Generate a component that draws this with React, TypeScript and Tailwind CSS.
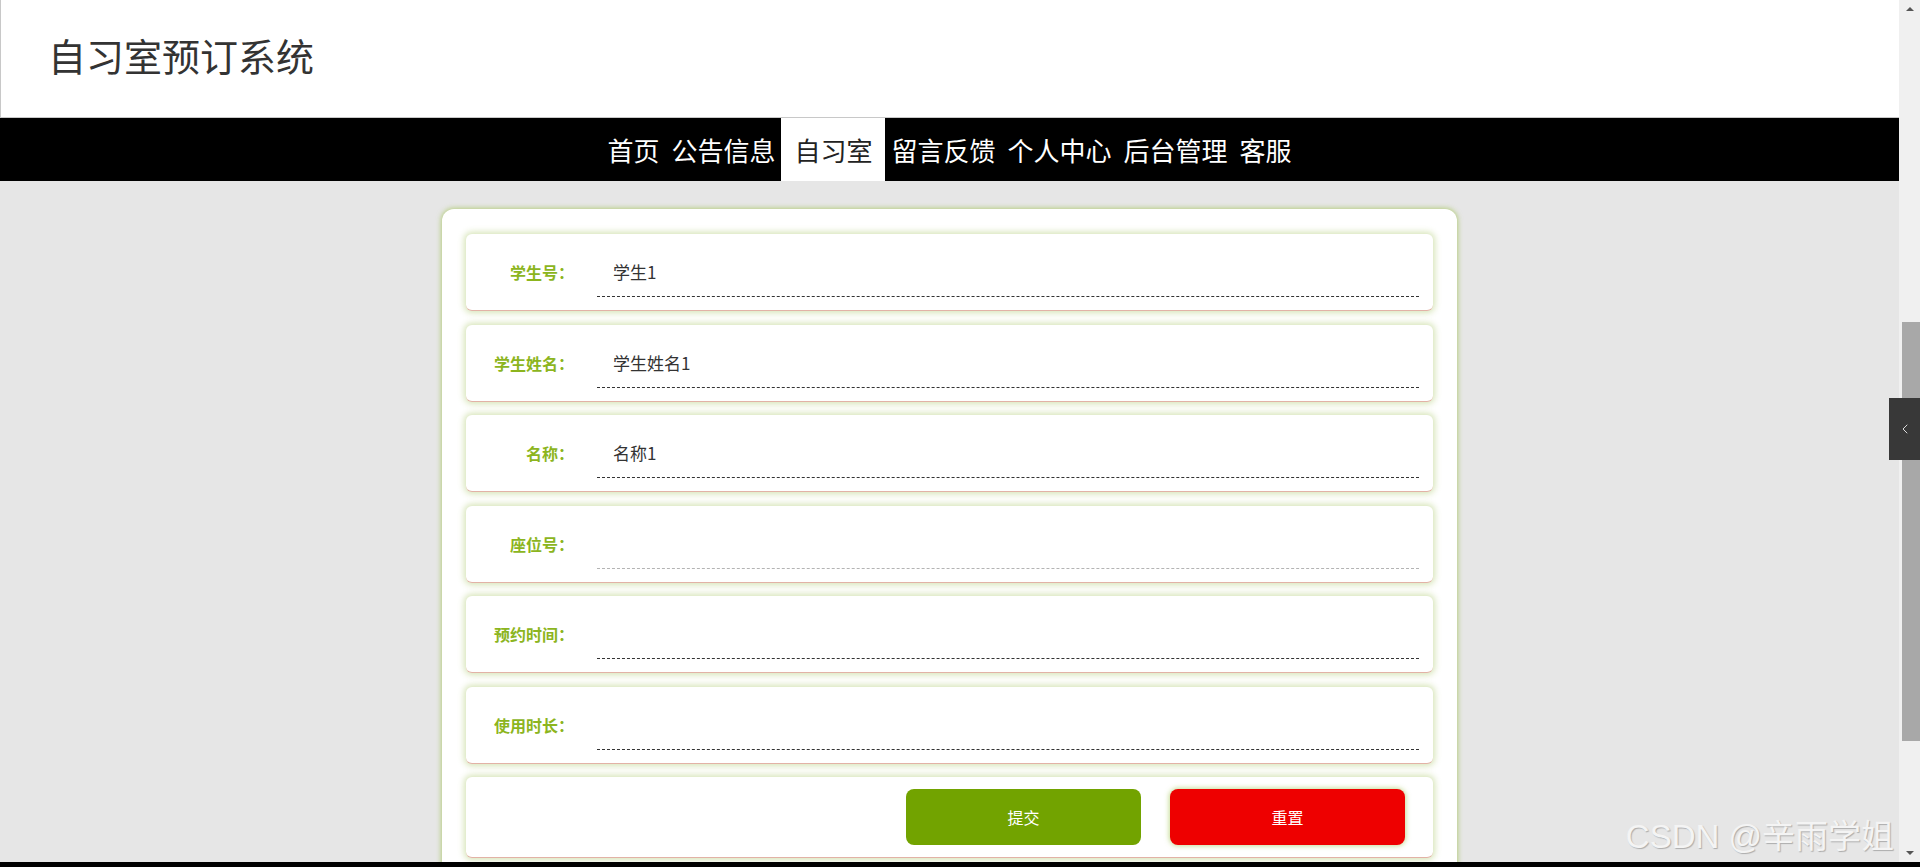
import { ChevronLeft } from 'lucide-react'

const FIELDS = [
  { label: '学生号：', value: '学生1' },
  { label: '学生姓名：', value: '学生姓名1' },
  { label: '名称：', value: '名称1' },
  { label: '座位号：', value: '', light: true },
  { label: '预约时间：', value: '' },
  { label: '使用时长：', value: '' },
]

const NAV = ['首页', '公告信息', '自习室', '留言反馈', '个人中心', '后台管理', '客服']

const rowCls =
  'flex shrink-0 rounded-md bg-white border-b border-[#e2b2a6] shadow-[0_0_6px_2px_rgba(165,195,95,0.45)]'

export default function App() {
  return (
    <div className="relative flex h-[867px] w-full overflow-hidden font-['Noto_Sans_CJK_SC','Noto_Sans',sans-serif]">
      {/* page */}
      <div className="flex min-w-0 flex-1 flex-col">
        <header className="flex h-[118px] shrink-0 items-center border-b border-l border-[#c8c8c8] bg-white pb-[8px] pl-[47px]">
          <h1 className="text-[38px] font-normal leading-none text-[#333]">自习室预订系统</h1>
        </header>

        <nav className="flex h-[63px] shrink-0 items-stretch justify-center bg-black">
          {NAV.map((item) =>
            item === '自习室' ? (
              <span key={item} className="flex items-center bg-white px-[13px] text-[26px] text-[#222]">
                {item}
              </span>
            ) : (
              <span key={item} className="flex items-center px-[6px] text-[26px] text-white">
                {item}
              </span>
            ),
          )}
        </nav>

        <main className="flex-1 bg-[#e6e6e6] pt-[28px]">
          <div className="mx-auto w-[1015px] rounded-xl bg-white px-[24px] pb-[40px] pt-[25px] shadow-[0_0_5px_1px_rgba(150,190,60,0.6)]">
            <div className="flex flex-col gap-[13.5px]">
              {FIELDS.map((f) => (
                <div key={f.label} className={rowCls + ' h-[77px]'}>
                  <label className="w-[108px] shrink-0 self-center text-right text-[16px] font-bold text-[#8cb51e]">
                    {f.label}
                  </label>
                  <div className="ml-[23px] mr-[14px] flex-1 pt-[26px]">
                    <input
                      readOnly
                      defaultValue={f.value}
                      className={
                        f.light
                          ? 'block h-[37px] w-full border-b border-dashed border-[#b4b4b4] pb-[13px] pl-[16px] text-[17px] leading-[24px] text-[#333] outline-none'
                          : 'block h-[37px] w-full border-b border-dashed border-[#333] pb-[13px] pl-[16px] text-[17px] leading-[24px] text-[#333] outline-none'
                      }
                    />
                  </div>
                </div>
              ))}

              <div className={rowCls + ' h-[81px] items-center justify-end gap-[29px] pr-[28px]'}>
                <button className="h-[56px] w-[235px] rounded-lg bg-[#72a300] text-[16px] text-white">提交</button>
                <button className="h-[56px] w-[235px] rounded-lg bg-[#ee0000] text-[16px] text-white shadow-[0_0_5px_1px_rgba(150,190,60,0.55)]">
                  重置
                </button>
              </div>
            </div>
          </div>
        </main>
      </div>

      {/* scrollbar */}
      <div className="flex w-[21px] shrink-0 flex-col bg-[#f0f0f0]">
        <div className="flex h-[17px] items-center justify-center">
          <div className="h-0 w-0 border-x-[4px] border-b-[4px] border-x-transparent border-b-[#555]" />
        </div>
        <div className="ml-[3px] mt-[305px] h-[419px] w-[18px] bg-[#a8a8a8]" />
        <div className="mb-[6px] mt-auto flex h-[17px] items-center justify-center">
          <div className="h-0 w-0 border-x-[4px] border-t-[4px] border-x-transparent border-t-[#555]" />
        </div>
      </div>

      {/* side tab */}
      <div className="absolute right-0 top-[398px] flex h-[62px] w-[31px] items-center justify-center bg-[#383838]">
        <ChevronLeft className="h-[16px] w-[16px] text-[#ddd]" strokeWidth={1.5} />
      </div>

      {/* watermark */}
      <div className="pointer-events-none absolute bottom-[14px] right-[26px] font-['Liberation_Sans','Noto_Sans_CJK_SC',sans-serif] text-[33px] leading-none text-[#f4f4f4] [text-shadow:1px_1px_1px_rgba(0,0,0,0.25)]">
        CSDN @辛雨学姐
      </div>

      {/* bottom strip */}
      <div className="absolute bottom-0 left-0 h-[5px] w-full bg-black" />
    </div>
  )
}
